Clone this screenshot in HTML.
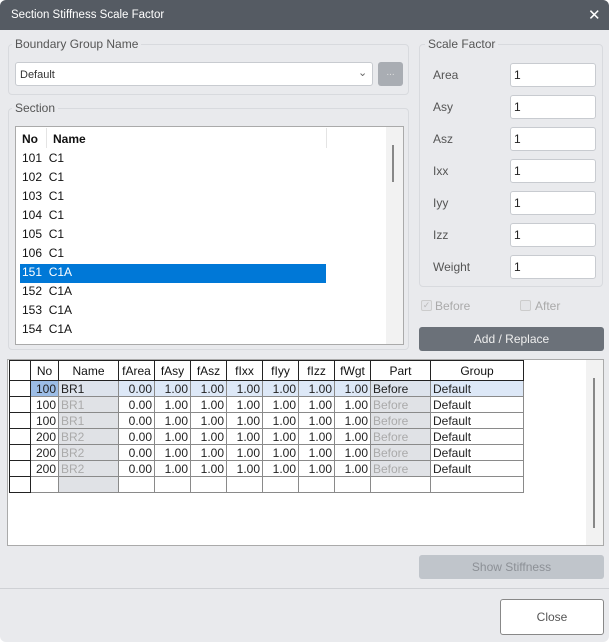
<!DOCTYPE html>
<html><head><meta charset="utf-8"><style>
*{box-sizing:border-box;margin:0;padding:0}
body{width:611px;height:642px;background:#fff;font-family:"Liberation Sans",sans-serif;font-size:12px;color:#222;position:relative;overflow:hidden}
.a{position:absolute}
.win{left:0;top:0;width:609px;height:642px;background:#e9eaed;border-radius:6px;overflow:hidden}
.title{left:0;top:0;width:609px;height:30px;background:#555b63;color:#fff;font-size:11.5px;padding:9px 0 0 11px}
.fs{border:1px solid #d8dade;border-radius:4px}
.lg{background:#e9eaed;color:#555;font-size:12px;padding:0 3px}
.inp{background:#fff;border:1px solid #c8cbd0;border-radius:3px}
.lbl{color:#555;font-size:12px}
.row{font-size:12px;color:#111;height:19px;line-height:19px}
table{border-collapse:collapse;position:absolute;left:9px;top:360px;font-size:12px;table-layout:fixed}
td{border:1px solid #8a8a8a;height:16px;padding:0 2px;line-height:14px;white-space:nowrap;overflow:hidden;font-family:"Liberation Sans",sans-serif}
th{border:1px solid #222;height:20px;font-weight:normal;background:#fff;color:#111}
.r{text-align:right}.g{color:#aaa}.gb{background:#e0e2e6}
.sel td{background:#dde8f7}
</style></head><body>
<div class="a win">
<div class="a title">Section Stiffness Scale Factor</div>
<div class="a" style="left:588px;top:6px;color:#fff;font-size:15px">✕</div>

<div class="a fs" style="left:8px;top:44px;width:401px;height:51px"></div>
<div class="a lg" style="left:12px;top:37px">Boundary Group Name</div>
<div class="a inp" style="left:15px;top:62px;width:358px;height:24px;padding:6px 4px;font-size:11px;color:#333">Default</div>
<div class="a" style="left:358px;top:66px;color:#666;font-size:11px">⌄</div>
<div class="a" style="left:378px;top:62px;width:25px;height:24px;background:#a9adb3;border-radius:3px;color:#ddd;text-align:center;font-size:10px;line-height:22px">...</div>

<div class="a fs" style="left:8px;top:108px;width:401px;height:242px"></div>
<div class="a lg" style="left:12px;top:101px">Section</div>
<div class="a" style="left:15px;top:126px;width:389px;height:219px;background:#fff;border:1px solid #aaa"></div>
<div class="a" style="left:386px;top:127px;width:17px;height:217px;background:#f2f2f2"></div>
<div class="a" style="left:392px;top:145px;width:2px;height:37px;background:#888"></div>
<div class="a" style="left:326px;top:128px;width:1px;height:20px;background:#e4e4e4"></div>
<div class="a" style="left:46px;top:128px;width:1px;height:20px;background:#e4e4e4"></div>
<div class="a row" style="left:22px;top:130px;font-weight:bold">No</div>
<div class="a row" style="left:53px;top:130px;font-weight:bold">Name</div>
<div class="a" style="left:20px;top:264px;width:306px;height:19px;background:#0078d7"></div>
<div class="a" style="left:22px;top:149px">
<div class="row">101&nbsp;&nbsp;C1</div><div class="row">102&nbsp;&nbsp;C1</div><div class="row">103&nbsp;&nbsp;C1</div><div class="row">104&nbsp;&nbsp;C1</div><div class="row">105&nbsp;&nbsp;C1</div><div class="row">106&nbsp;&nbsp;C1</div><div class="row" style="color:#fff">151&nbsp;&nbsp;C1A</div><div class="row">152&nbsp;&nbsp;C1A</div><div class="row">153&nbsp;&nbsp;C1A</div><div class="row">154&nbsp;&nbsp;C1A</div>
</div>

<div class="a fs" style="left:419px;top:44px;width:184px;height:243px"></div>
<div class="a lg" style="left:425px;top:37px">Scale Factor</div>
<div class="a lbl" style="left:433px;top:68px">Area</div>
<div class="a lbl" style="left:433px;top:100px">Asy</div>
<div class="a lbl" style="left:433px;top:132px">Asz</div>
<div class="a lbl" style="left:433px;top:164px">Ixx</div>
<div class="a lbl" style="left:433px;top:196px">Iyy</div>
<div class="a lbl" style="left:433px;top:228px">Izz</div>
<div class="a lbl" style="left:433px;top:260px">Weight</div>
<div class="a inp" style="left:510px;top:63px;width:86px;height:24px;padding:4px 3px">1</div>
<div class="a inp" style="left:510px;top:95px;width:86px;height:24px;padding:4px 3px">1</div>
<div class="a inp" style="left:510px;top:127px;width:86px;height:24px;padding:4px 3px">1</div>
<div class="a inp" style="left:510px;top:159px;width:86px;height:24px;padding:4px 3px">1</div>
<div class="a inp" style="left:510px;top:191px;width:86px;height:24px;padding:4px 3px">1</div>
<div class="a inp" style="left:510px;top:223px;width:86px;height:24px;padding:4px 3px">1</div>
<div class="a inp" style="left:510px;top:255px;width:86px;height:24px;padding:4px 3px">1</div>
<div class="a" style="left:421px;top:300px;width:11px;height:11px;border:1px solid #ccc;border-radius:2px;background:#e4e5e8;font-size:9px;color:#bbb;line-height:9px;text-align:center">✓</div>
<div class="a" style="left:435px;top:299px;color:#aaa">Before</div>
<div class="a" style="left:520px;top:300px;width:11px;height:11px;border:1px solid #ccc;border-radius:2px;background:#e4e5e8"></div>
<div class="a" style="left:535px;top:299px;color:#aaa">After</div>
<div class="a" style="left:419px;top:327px;width:185px;height:24px;background:#6b7179;border-radius:3px;color:#eee;text-align:center;line-height:24px">Add / Replace</div>

<div class="a" style="left:7px;top:359px;width:597px;height:187px;background:#fff;border:1px solid #aaa"></div>
<div class="a" style="left:586px;top:360px;width:17px;height:185px;background:#f2f2f2"></div>
<div class="a" style="left:593px;top:378px;width:2px;height:150px;background:#888"></div>
<table>
<colgroup><col style="width:21px"><col style="width:28px"><col style="width:60px"><col style="width:36px"><col style="width:36px"><col style="width:36px"><col style="width:36px"><col style="width:36px"><col style="width:36px"><col style="width:36px"><col style="width:60px"><col style="width:93px"></colgroup>
<tr><th></th><th>No</th><th>Name</th><th>fArea</th><th>fAsy</th><th>fAsz</th><th>fIxx</th><th>fIyy</th><th>fIzz</th><th>fWgt</th><th>Part</th><th>Group</th></tr>
<tr class="sel"><td style="background:#fff;border-color:#222"></td><td class="r" style="background:#9cbde6">100</td><td class="gb" style="background:#dde3ec">BR1</td><td class="r">0.00</td><td class="r">1.00</td><td class="r">1.00</td><td class="r">1.00</td><td class="r">1.00</td><td class="r">1.00</td><td class="r">1.00</td><td style="background:#dde3ec">Before</td><td>Default</td></tr>
<tr><td style="border-color:#222"></td><td class="r">100</td><td class="gb g">BR1</td><td class="r">0.00</td><td class="r">1.00</td><td class="r">1.00</td><td class="r">1.00</td><td class="r">1.00</td><td class="r">1.00</td><td class="r">1.00</td><td class="gb g">Before</td><td>Default</td></tr>
<tr><td style="border-color:#222"></td><td class="r">100</td><td class="gb g">BR1</td><td class="r">0.00</td><td class="r">1.00</td><td class="r">1.00</td><td class="r">1.00</td><td class="r">1.00</td><td class="r">1.00</td><td class="r">1.00</td><td class="gb g">Before</td><td>Default</td></tr>
<tr><td style="border-color:#222"></td><td class="r">200</td><td class="gb g">BR2</td><td class="r">0.00</td><td class="r">1.00</td><td class="r">1.00</td><td class="r">1.00</td><td class="r">1.00</td><td class="r">1.00</td><td class="r">1.00</td><td class="gb g">Before</td><td>Default</td></tr>
<tr><td style="border-color:#222"></td><td class="r">200</td><td class="gb g">BR2</td><td class="r">0.00</td><td class="r">1.00</td><td class="r">1.00</td><td class="r">1.00</td><td class="r">1.00</td><td class="r">1.00</td><td class="r">1.00</td><td class="gb g">Before</td><td>Default</td></tr>
<tr><td style="border-color:#222"></td><td class="r">200</td><td class="gb g">BR2</td><td class="r">0.00</td><td class="r">1.00</td><td class="r">1.00</td><td class="r">1.00</td><td class="r">1.00</td><td class="r">1.00</td><td class="r">1.00</td><td class="gb g">Before</td><td>Default</td></tr>
<tr><td style="border-color:#222"></td><td></td><td class="gb"></td><td></td><td></td><td></td><td></td><td></td><td></td><td></td><td></td><td></td></tr>
</table>

<div class="a" style="left:419px;top:555px;width:185px;height:24px;background:#c0c5cb;border-radius:3px;color:#8c9096;text-align:center;line-height:24px">Show Stiffness</div>
<div class="a" style="left:0;top:588px;width:609px;height:1px;background:#cfd1d5"></div>
<div class="a" style="left:500px;top:599px;width:104px;height:36px;background:#fff;border:1px solid #888;border-radius:3px;color:#555;text-align:center;line-height:34px">Close</div>
</div>
</body></html>
